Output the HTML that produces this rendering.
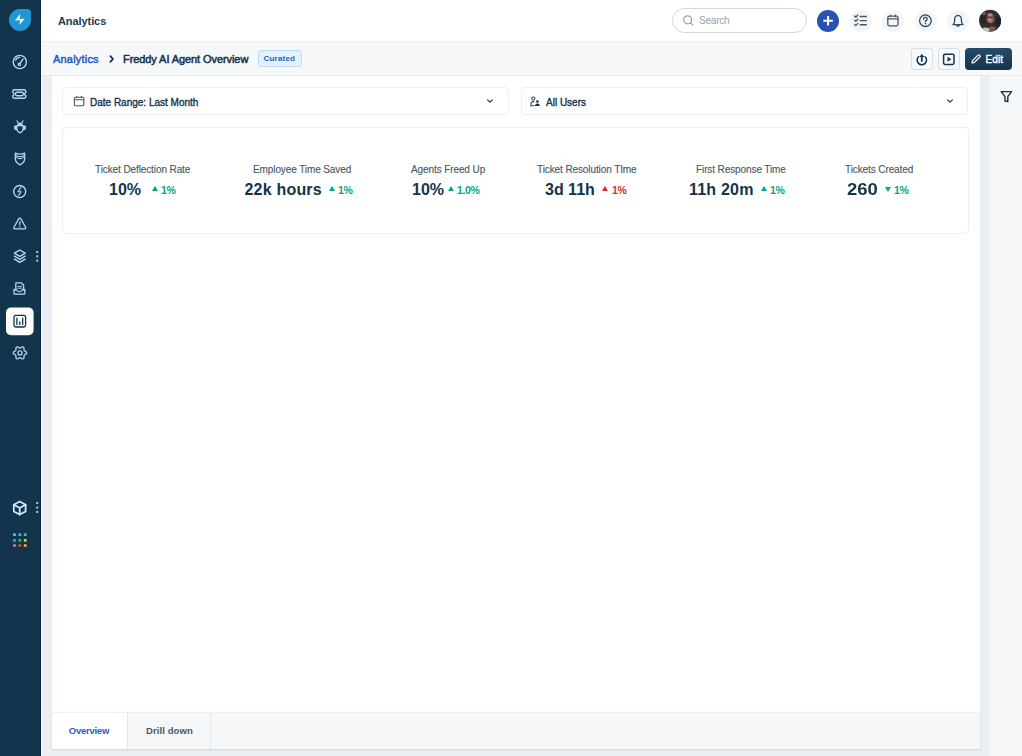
<!DOCTYPE html>
<html><head><meta charset="utf-8">
<style>
*{box-sizing:border-box;margin:0;padding:0}
html,body{width:1022px;height:756px;overflow:hidden;background:#EBEFF3;font-family:"Liberation Sans",sans-serif;color:#12344D}
.a{position:absolute;white-space:nowrap}
#side{position:absolute;left:0;top:0;width:41px;height:756px;background:#12344D;border-right:1px solid #0A2A44}
#sline{position:absolute;left:41px;top:76px;width:1px;height:680px;background:#F7F9FB}
#logo{position:absolute;left:9px;top:9px;width:22px;height:22px;background:#2196D3;border-radius:11px 4px 11px 11px}
#hdr{position:absolute;left:41px;top:0;width:981px;height:42px;background:#fff;border-bottom:1px solid #EFF2F4}
#search{position:absolute;left:672px;top:8px;width:135px;height:25px;border:1px solid #CFD7DF;border-radius:13px;background:#fff}
.hic{position:absolute;top:10px;width:22px;height:22px;border-radius:11px;background:#F3F5F7}
#crumb{position:absolute;left:41px;top:42px;width:981px;height:34px;background:#F6F8F9;border-bottom:1px solid #E5EBEE}
#panel{position:absolute;left:52px;top:76px;width:928px;height:673px;background:#fff}
#rail{position:absolute;left:990px;top:76px;width:32px;height:680px;background:#F5F7F9}
.fbox{position:absolute;top:87px;height:28px;border:1px solid #EDF0F3;border-radius:4px;background:#fff}
#card{position:absolute;left:62px;top:127px;width:907px;height:107px;border:1px solid #EDF0F3;border-radius:4px;background:#fff}
.lbl{font-size:10px;color:#475867;top:164px;letter-spacing:-0.1px;-webkit-text-stroke:0.12px #475867}
.val{font-size:16px;font-weight:bold;color:#12344D;top:181px}
.dl{font-size:10.5px;font-weight:bold;color:#00A886;top:183.5px;letter-spacing:-0.4px}
.dl.red{color:#D72D30}
.tri{position:absolute;width:0;height:0;border-left:3px solid transparent;border-right:3px solid transparent}
.up{border-bottom:5px solid #00A886;top:186px}
.up.red{border-bottom-color:#D72D30}
.dn{border-top:5px solid #00A886;top:187px}
#tabs{position:absolute;left:52px;top:712px;width:928px;height:37px;background:#F5F7F9;border-top:1px solid #EDEFF1;box-shadow:0 1px 2px rgba(18,52,77,0.12)}
.tab{position:absolute;top:0;height:36px;font-size:10px;text-align:center;line-height:36px}
.btn{position:absolute;top:48px;width:22px;height:22px;border:1px solid #DADFE3;border-radius:3px;background:#F7F9FA}
#edit{position:absolute;left:965px;top:48px;width:47px;height:22px;border-radius:4px;background:linear-gradient(#274A68,#12344D)}
</style></head><body>
<div id="side"></div>
<div id="sline"></div>
<div id="logo"></div>
<svg class="a" style="left:0;top:0" width="41" height="756" viewBox="0 0 41 756">
 <!-- logo bolt -->
 <path d="M20.2 14 L15 20.5 L20.2 20.3 L19.3 25 L24.6 18.7 L19.5 18.9 Z" fill="#fff"/>
 <g fill="none" stroke="#B9D3EA" stroke-width="1.4" stroke-linecap="round" stroke-linejoin="round">
  <!-- gauge -->
  <circle cx="19.8" cy="62" r="6.6"/>
  <path d="M15.6 60.2 A4.6 4.6 0 0 1 19.6 57.4"/>
  <circle cx="19.4" cy="64.3" r="1.2"/>
  <path d="M20.2 63.4 L23 59.2"/>
  <!-- ticket -->
  <path d="M14.2 89.8 H24.4 A1.4 1.4 0 0 1 25.8 91.2 V92.4 Q24.6 92.8 24.6 94 Q24.6 95.2 25.8 95.6 V96.8 A1.4 1.4 0 0 1 24.4 98.2 H14.2 A1.4 1.4 0 0 1 12.8 96.8 V95.6 Q14 95.2 14 94 Q14 92.8 12.8 92.4 V91.2 A1.4 1.4 0 0 1 14.2 89.8 Z"/>
  <rect x="15.4" y="92.3" width="8" height="3.4" rx="1.7"/>
  <!-- shield mask -->
  <path d="M15.3 153.2 Q20 155 24.7 153.2 V158.6 Q24.7 162.6 20 164.8 Q15.3 162.6 15.3 158.6 Z" stroke-width="1.3"/>
  <path d="M15.5 155.6 Q20 158 24.5 155.6 M16.6 157.6 Q20 159.6 23.4 157.6" stroke-width="1.1"/>
  <!-- bolt circle -->
  <circle cx="19.7" cy="191.5" r="6"/>
  <path d="M20.8 187.4 L18 191.8 H21.2 L18.6 195.4" stroke-width="1.1"/>
  <!-- warning -->
  <path d="M18.7 218.9 Q19.8 217.2 20.9 218.9 L25.6 227.2 Q26.4 228.8 24.6 228.8 H15 Q13.2 228.8 14 227.2 Z" stroke-width="1.3"/>
  <path d="M19.8 221.8 V224.8" stroke-width="1.3"/>
  <circle cx="19.8" cy="226.9" r="0.2" stroke-width="1.2"/>
  <!-- layers -->
  <path d="M19.8 250 L25.2 253.2 L19.8 256.4 L14.4 253.2 Z"/>
  <path d="M14.4 256.2 L19.8 259.4 L25.2 256.2"/>
  <path d="M14.4 259.2 L19.8 262.4 L25.2 259.2"/>
  <!-- inbox doc -->
  <path d="M15.8 290 V283.2 Q15.8 282.8 16.2 282.8 H21.2 L23.6 285.2 V290" stroke-width="1.3"/>
  <path d="M14 289.4 V293.6 Q14 294.2 14.6 294.2 H24.2 Q24.8 294.2 24.8 293.6 V289.4" stroke-width="1.3"/>
  <path d="M14 289.6 H16.6 Q17 291.6 19.4 291.6 Q21.8 291.6 22.2 289.6 H24.8" stroke-width="1.1"/>
  <path d="M17.6 286.4 H21.6 M17.6 288.2 H21.6" stroke-width="0.9"/>
  <!-- gear -->
  <path d="M26.65 352.90 L26.56 353.33 L26.32 353.74 L25.95 354.09 L25.50 354.39 L25.05 354.63 L24.64 354.84 L24.32 355.05 L24.11 355.30 L24.00 355.61 L23.98 355.99 L24.00 356.45 L24.02 356.97 L23.98 357.50 L23.86 357.99 L23.63 358.41 L23.30 358.70 L22.88 358.84 L22.41 358.83 L21.92 358.69 L21.44 358.45 L21.00 358.18 L20.61 357.93 L20.27 357.76 L19.95 357.70 L19.63 357.76 L19.29 357.93 L18.90 358.18 L18.46 358.45 L17.98 358.69 L17.49 358.83 L17.02 358.84 L16.60 358.70 L16.27 358.41 L16.04 357.99 L15.92 357.50 L15.88 356.97 L15.90 356.45 L15.92 355.99 L15.90 355.61 L15.79 355.30 L15.58 355.05 L15.26 354.84 L14.85 354.63 L14.40 354.39 L13.95 354.09 L13.58 353.74 L13.34 353.33 L13.25 352.90 L13.34 352.47 L13.58 352.06 L13.95 351.71 L14.40 351.41 L14.85 351.17 L15.26 350.96 L15.58 350.75 L15.79 350.50 L15.90 350.19 L15.92 349.81 L15.90 349.35 L15.88 348.83 L15.92 348.30 L16.04 347.81 L16.27 347.39 L16.60 347.10 L17.02 346.96 L17.49 346.97 L17.98 347.11 L18.46 347.35 L18.90 347.62 L19.29 347.87 L19.63 348.04 L19.95 348.10 L20.27 348.04 L20.61 347.87 L21.00 347.62 L21.44 347.35 L21.92 347.11 L22.41 346.97 L22.88 346.96 L23.30 347.10 L23.63 347.39 L23.86 347.81 L23.98 348.30 L24.02 348.83 L24.00 349.35 L23.98 349.81 L24.00 350.19 L24.11 350.50 L24.32 350.75 L24.64 350.96 L25.05 351.17 L25.50 351.41 L25.95 351.71 L26.32 352.06 L26.56 352.47 Z" stroke-width="1.3"/>
  <circle cx="19.95" cy="352.9" r="2" stroke-width="1.3"/>
 </g>
 <!-- bug -->
 <g fill="#B9D3EA">
  <path d="M16.9 120.8 L18.3 123.1 M23.1 120.8 L21.7 123.1" stroke="#B9D3EA" stroke-width="1.1" stroke-linecap="round"/>
  <path d="M17.3 125 Q17.3 122.5 20 122.5 Q22.7 122.5 22.7 125 Z"/>
  <path d="M16.9 125.8 L14 125.4 L14.4 129.8 L16.9 130.2 Z M23.1 125.8 L26 125.4 L25.6 129.8 L23.1 130.2 Z"/>
 </g>
 <path d="M16.9 125.6 H23.1 V128.8 Q23.1 131.4 20 132.9 Q16.9 131.4 16.9 128.8 Z" fill="none" stroke="#B9D3EA" stroke-width="1.2"/>
 <!-- analytics active -->
 <rect x="6" y="307.6" width="27.6" height="27.6" rx="5" fill="#fff"/>
 <g fill="none" stroke="#12344D" stroke-width="1.3" stroke-linecap="round">
  <rect x="14" y="315.4" width="11.6" height="11.6" rx="1.8"/>
  <path d="M16.9 318.2 V324.6 M19.8 322 V324.6 M22.7 318.2 V324.6"/>
 </g>
 <!-- dots -->
 <g fill="#B7C3CF">
  <rect x="36.2" y="251" width="2" height="2"/><rect x="36.2" y="255.3" width="2" height="2"/><rect x="36.2" y="259.7" width="2" height="2"/>
  <rect x="36.2" y="502" width="2" height="2"/><rect x="36.2" y="506.6" width="2" height="2"/><rect x="36.2" y="511" width="2" height="2"/>
 </g>
 <!-- cube -->
 <g fill="none" stroke="#D6E7F8" stroke-width="1.75" stroke-linejoin="round" stroke-linecap="round">
  <path d="M19.7 501.4 L25.6 504.7 V511.4 L19.7 514.6 L13.8 511.4 V504.7 Z"/>
  <path d="M13.8 504.7 L19.7 508 L25.6 504.7 M19.7 508 V514.6"/>
 </g>
 <!-- grid -->
 <rect x="13.15" y="533.35" width="2.7" height="2.7" rx="0.5" fill="#4ED1A1"/>
 <rect x="18.50" y="533.35" width="2.7" height="2.7" rx="0.5" fill="#2DB5EA"/>
 <rect x="23.85" y="533.35" width="2.7" height="2.7" rx="0.5" fill="#3FCB8A"/>
 <rect x="13.15" y="538.95" width="2.7" height="2.7" rx="0.5" fill="#3B9BE5"/>
 <rect x="18.50" y="538.95" width="2.7" height="2.7" rx="0.5" fill="#36B96C"/>
 <rect x="23.85" y="538.95" width="2.7" height="2.7" rx="0.5" fill="#FFC000"/>
 <rect x="13.15" y="544.15" width="2.7" height="2.7" rx="0.5" fill="#C87DD8"/>
 <rect x="18.50" y="544.15" width="2.7" height="2.7" rx="0.5" fill="#E94A3F"/>
 <rect x="23.85" y="544.15" width="2.7" height="2.7" rx="0.5" fill="#FFC000"/>
</svg>

<div id="hdr"></div>
<div class="a" style="left:58px;top:15px;font-size:11px;font-weight:bold;letter-spacing:-0.08px;color:#1C3B55">Analytics</div>
<div id="search"></div>
<svg class="a" style="left:682px;top:14px" width="13" height="13" viewBox="0 0 13 13"><circle cx="5.6" cy="5.8" r="4" fill="none" stroke="#92A2B1" stroke-width="1.2"/><path d="M8.6 8.8 L11 11.2" stroke="#92A2B1" stroke-width="1.2" stroke-linecap="round"/></svg>
<div class="a" style="left:699px;top:15px;font-size:10px;color:#92A2B1;letter-spacing:-0.2px">Search</div>
<div class="hic" style="left:817px;background:#2752B4"></div>
<svg class="a" style="left:817px;top:10px" width="22" height="22" viewBox="0 0 22 22"><path d="M11.1 6.1 V15.6 M6.35 10.85 H15.85" stroke="#fff" stroke-width="2" stroke-linecap="butt"/></svg>
<div class="hic" style="left:850px"></div>
<div class="hic" style="left:882px"></div>
<div class="hic" style="left:915px"></div>
<div class="hic" style="left:947px"></div>
<svg class="a" style="left:0;top:0" width="1022" height="42" viewBox="0 0 1022 42">
 <g fill="none" stroke="#475867" stroke-width="1.3" stroke-linecap="round" stroke-linejoin="round">
  <path d="M854.6 16 L855.8 17.2 L857.8 15 M854.6 20.2 L855.8 21.4 L857.8 19.2 M854.6 24.4 L855.8 25.6 L857.8 23.4"/>
  <path d="M860.2 16.5 H866.4 M860.2 20.6 H866.4 M860.2 24.8 H866.4" stroke-width="1.4"/>
  <rect x="887.8" y="16.2" width="10.2" height="9.6" rx="1.5"/>
  <path d="M888 18.8 H897.8 M890.4 15.2 V16.6 M895.4 15.2 V16.6"/>
 </g>
 <g fill="none" stroke="#264966" stroke-width="1.3" stroke-linecap="round" stroke-linejoin="round">
  <circle cx="925.4" cy="20.7" r="5.8"/>
  <path d="M923.6 19.2 Q923.6 17.3 925.4 17.3 Q927.2 17.3 927.2 19 Q927.2 20.2 925.4 20.9 V21.6"/>
  <path d="M953 24.6 H963 Q961.4 23 961.4 21 V19.6 Q961.4 15.8 958 15.4 Q954.6 15.8 954.6 19.6 V21 Q954.6 23 953 24.6 Z"/>
  <path d="M956.6 25.4 Q958 27.2 959.4 25.4"/>
 </g>
 <circle cx="925.4" cy="23.6" r="0.8" fill="#264966"/>
 <defs>
  <clipPath id="av"><circle cx="990.1" cy="20.8" r="11"/></clipPath>
  <radialGradient id="face" cx="0.5" cy="0.5" r="0.5"><stop offset="0" stop-color="#C9927E"/><stop offset="1" stop-color="#8A5A48"/></radialGradient>
 </defs>
 <defs><filter id="bl" x="-20%" y="-20%" width="140%" height="140%"><feGaussianBlur stdDeviation="0.7"/></filter></defs>
 <g clip-path="url(#av)">
  <rect x="978" y="9" width="24" height="24" fill="#3B2E2A"/>
  <g filter="url(#bl)">
   <ellipse cx="983" cy="18" rx="3.5" ry="6" fill="#2A2528"/>
   <ellipse cx="998.5" cy="22" rx="2.5" ry="5" fill="#162238"/>
   <ellipse cx="990.5" cy="18.5" rx="4" ry="5" fill="#8A625A"/>
   <ellipse cx="990" cy="20" rx="1.6" ry="1.5" fill="#C88E8A"/>
   <ellipse cx="990" cy="14.8" rx="2.4" ry="1.6" fill="#B78682"/>
   <path d="M985.5 22 Q990.5 27.5 996 21.5 L996.5 25 Q991 29 986 25.5 Z" fill="#3A2824"/>
   <ellipse cx="992" cy="28.5" rx="3.5" ry="2.2" fill="#7A5A52"/>
   <ellipse cx="985.5" cy="30" rx="4" ry="2.6" fill="#BFC3C8"/>
   <ellipse cx="984" cy="13.5" rx="2.2" ry="1.6" fill="#56606E"/>
  </g>
  <path d="M986 17.2 H996.5" stroke="#2B2322" stroke-width="0.7"/>
 </g>
</svg>

<div id="crumb"></div>
<div class="a" style="left:53px;top:53px;font-size:11px;color:#2C5CC5;-webkit-text-stroke:0.5px #2C5CC5;letter-spacing:0.2px">Analytics</div>
<svg class="a" style="left:108px;top:54px" width="8" height="10" viewBox="0 0 8 10"><path d="M2.4 2.2 L5 5 L2.4 7.8" fill="none" stroke="#12344D" stroke-width="1.8" stroke-linecap="round" stroke-linejoin="round"/></svg>
<div class="a" style="left:123px;top:53px;font-size:11px;color:#12344D;-webkit-text-stroke:0.5px #12344D;letter-spacing:-0.08px">Freddy AI Agent Overview</div>
<div class="a" style="left:258px;top:50px;width:44px;height:17px;background:#E5F2FD;border:1px solid #BBDCFE;border-radius:3px"></div>
<div class="a" style="left:263.5px;top:54.3px;font-size:8px;font-weight:bold;color:#2C5CC5;letter-spacing:0.2px">Curated</div>
<div class="btn" style="left:911px"></div>
<div class="btn" style="left:938px"></div>
<svg class="a" style="left:900px;top:42px" width="70" height="34" viewBox="900 42 70 34">
 <g fill="none" stroke="#12344D" stroke-width="1.5" stroke-linecap="round" stroke-linejoin="round">
  <path d="M918.5 56.7 A4.7 4.7 0 1 0 925.1 56.7"/>
  <path d="M921.8 61.7 V56" stroke-width="1.8" stroke-linecap="butt"/>
  <rect x="943.6" y="54.2" width="10.4" height="10.2" rx="1.4"/>
 </g>
 <path d="M947.5 56.8 L951.4 59.3 L947.5 61.8 Z" fill="#12344D"/><path d="M919.2 57 L921.8 54 L924.4 57 Z" fill="#12344D"/>
</svg>
<div id="edit"></div>
<svg class="a" style="left:969px;top:52px" width="14" height="14" viewBox="0 0 14 14"><path d="M3 11 L3.4 8.8 L9 3.2 A1.1 1.1 0 0 1 10.6 3.2 L10.8 3.4 A1.1 1.1 0 0 1 10.8 5 L5.2 10.6 Z" fill="none" stroke="#fff" stroke-width="1.2" stroke-linejoin="round"/></svg>
<div class="a" style="left:985.5px;top:54px;font-size:10px;color:#fff;-webkit-text-stroke:0.4px #fff;letter-spacing:0.1px">Edit</div>

<div id="panel"></div>
<div id="rail"></div>
<svg class="a" style="left:999px;top:89px" width="15" height="15" viewBox="0 0 15 15"><path d="M2.2 2.6 H12.6 L8.8 7.6 V12.6 L6 12 V7.6 Z" fill="none" stroke="#12344D" stroke-width="1.4" stroke-linejoin="round"/></svg>

<div class="fbox" style="left:62px;width:447px"></div>
<svg class="a" style="left:73px;top:95px" width="12" height="12" viewBox="0 0 12 12"><g fill="none" stroke="#475867" stroke-width="1.1" stroke-linecap="round"><rect x="1.4" y="2.2" width="9.4" height="8.6" rx="1.4"/><path d="M1.5 4.8 H10.7 M3.8 1.2 V2.6 M8.4 1.2 V2.6"/></g></svg>
<div class="a" style="left:90px;top:96.6px;font-size:10px;color:#12344D;-webkit-text-stroke:0.35px #12344D;letter-spacing:0px">Date Range: Last Month</div>
<svg class="a" style="left:485px;top:96px" width="10" height="10" viewBox="0 0 10 10"><path d="M2.6 3.9 L5 6.2 L7.4 3.9" fill="none" stroke="#12344D" stroke-width="1.15" stroke-linecap="round" stroke-linejoin="round"/></svg>
<div class="fbox" style="left:521px;width:447px"></div>
<svg class="a" style="left:528px;top:93.6px" width="14" height="14" viewBox="528 93 14 14"><g fill="none" stroke="#264966" stroke-width="1.05" stroke-linecap="round"><circle cx="533.3" cy="97.6" r="1.6"/><path d="M531 104.8 V102.8 Q531 100.6 533.3 100.6 H534"/><path d="M531 104.8 H534.2"/></g><circle cx="537.4" cy="100.5" r="1.35" fill="#12344D"/><path d="M535 105 Q535 102.4 537.4 102.4 Q539.8 102.4 539.8 105 Z" fill="#12344D"/></svg>
<div class="a" style="left:546px;top:96.6px;font-size:10px;color:#12344D;-webkit-text-stroke:0.35px #12344D;letter-spacing:0px">All Users</div>
<svg class="a" style="left:945px;top:96px" width="10" height="10" viewBox="0 0 10 10"><path d="M2.6 3.9 L5 6.2 L7.4 3.9" fill="none" stroke="#12344D" stroke-width="1.15" stroke-linecap="round" stroke-linejoin="round"/></svg>

<div id="card"></div>
<div class="a lbl" style="left:95px">Ticket Deflection Rate</div>
<div class="a val" style="left:109px">10%</div>
<div class="tri up" style="left:152px"></div>
<div class="a dl" style="left:161px">1%</div>

<div class="a lbl" style="left:253px">Employee Time Saved</div>
<div class="a val" style="left:244.5px;letter-spacing:0.2px">22k hours</div>
<div class="tri up" style="left:329px"></div>
<div class="a dl" style="left:338px">1%</div>

<div class="a lbl" style="left:411px">Agents Freed Up</div>
<div class="a val" style="left:412px">10%</div>
<div class="tri up" style="left:448px"></div>
<div class="a dl" style="left:457px">1.0%</div>

<div class="a lbl" style="left:537px">Ticket Resolution TIme</div>
<div class="a val" style="left:545px">3d 11h</div>
<div class="tri up red" style="left:602px"></div>
<div class="a dl red" style="left:612px">1%</div>

<div class="a lbl" style="left:696px">First Response Time</div>
<div class="a val" style="left:689px;letter-spacing:0.2px">11h 20m</div>
<div class="tri up" style="left:761px"></div>
<div class="a dl" style="left:770px">1%</div>

<div class="a lbl" style="left:845px">Tickets Created</div>
<div class="a val" style="left:847px;transform:scaleX(1.155);transform-origin:0 0">260</div>
<div class="tri dn" style="left:885px"></div>
<div class="a dl" style="left:894px">1%</div>

<div id="tabs">
  <div class="tab" style="left:0;width:76px;background:#fff;border-right:1px solid #E4E8EC"></div>
  <div class="tab" style="left:76px;width:83px;border-right:1px solid #E4E8EC"></div>
</div>
<div class="a" style="left:68.8px;top:725px;font-size:9.5px;font-weight:bold;color:#2C5CC5;letter-spacing:-0.25px">Overview</div>
<div class="a" style="left:146px;top:725px;font-size:9.5px;font-weight:bold;color:#475867;letter-spacing:0.1px">Drill down</div>
</body></html>
